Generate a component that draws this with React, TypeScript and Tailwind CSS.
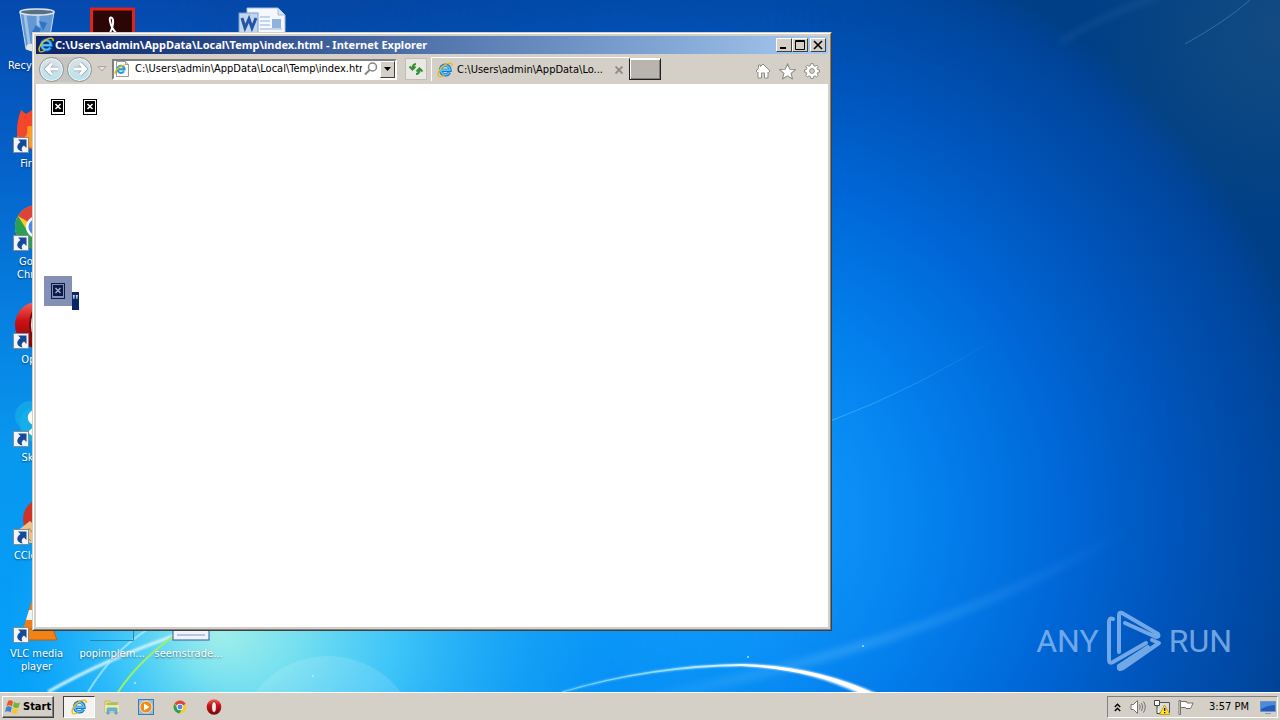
import React, { useState } from 'react';

const uiFont = "font-['DejaVu_Sans_Condensed','DejaVu_Sans',sans-serif]";
const raised = 'bg-[#d4d0c8] border border-t-white border-l-white border-r-[#404040] border-b-[#404040]';

const filePath = 'C:\\Users\\admin\\AppData\\Local\\Temp\\index.html';

/* ---------- wallpaper ---------- */

const Wallpaper: React.FC = () => (
  <svg className="absolute inset-0 h-full w-full" viewBox="0 0 1280 693" preserveAspectRatio="none" aria-hidden="true">
    <defs>
      <radialGradient id="glow" gradientUnits="userSpaceOnUse" cx="0" cy="0" r="1" gradientTransform="translate(690 520) scale(640 610)">
        <stop offset="0" stopColor="#1ba2fd" />
        <stop offset="0.22" stopColor="#0d92f8" />
        <stop offset="0.4" stopColor="#037eec" />
        <stop offset="0.58" stopColor="#0068d8" />
        <stop offset="0.76" stopColor="#0054ba" />
        <stop offset="0.95" stopColor="#004499" />
        <stop offset="1.15" stopColor="#003f85" />
      </radialGradient>
      <linearGradient id="leftSky" x1="0" y1="0" x2="0" y2="1">
        <stop offset="0" stopColor="#0549ad" />
        <stop offset="0.22" stopColor="#0560c8" />
        <stop offset="0.45" stopColor="#067fe0" />
        <stop offset="0.65" stopColor="#0898f0" />
        <stop offset="1" stopColor="#05a0fa" />
      </linearGradient>
      <linearGradient id="leftFade" x1="0" y1="0" x2="1" y2="0">
        <stop offset="0" stopColor="#fff" />
        <stop offset="0.2" stopColor="#fff" />
        <stop offset="1" stopColor="#000" />
      </linearGradient>
      <mask id="leftMask">
        <rect width="850" height="693" fill="url(#leftFade)" />
      </mask>
      <radialGradient id="aqua" gradientUnits="userSpaceOnUse" cx="0" cy="0" r="1" fx="-0.3" fy="0" gradientTransform="translate(310 635) scale(305 260)">
        <stop offset="0" stopColor="#a0eeea" />
        <stop offset="0.2" stopColor="#76e0f0" />
        <stop offset="0.45" stopColor="#48cefa" stopOpacity="0.85" />
        <stop offset="1" stopColor="#20b0fa" stopOpacity="0" />
      </radialGradient>
      <radialGradient id="corner" gradientUnits="userSpaceOnUse" cx="1280" cy="30" r="190">
        <stop offset="0" stopColor="#1a5080" stopOpacity="0.75" />
        <stop offset="1" stopColor="#1a5080" stopOpacity="0" />
      </radialGradient>
      <linearGradient id="arc" x1="560" y1="0" x2="760" y2="0" gradientUnits="userSpaceOnUse">
        <stop offset="0" stopColor="#8fdcff" stopOpacity="0.7" />
        <stop offset="0.6" stopColor="#9fe0ff" />
        <stop offset="1" stopColor="#fff" />
      </linearGradient>
      <linearGradient id="thin" x1="832" y1="0" x2="1000" y2="0" gradientUnits="userSpaceOnUse">
        <stop offset="0" stopColor="#55b8ff" stopOpacity="0.7" />
        <stop offset="1" stopColor="#55b8ff" stopOpacity="0" />
      </linearGradient>
      <linearGradient id="beam" x1="560" y1="0" x2="1130" y2="0" gradientUnits="userSpaceOnUse">
        <stop offset="0" stopColor="#6cc4ff" stopOpacity="0" />
        <stop offset="0.5" stopColor="#6cc4ff" stopOpacity="0.3" />
        <stop offset="1" stopColor="#6cc4ff" stopOpacity="0" />
      </linearGradient>
      <filter id="soft" x="-20%" y="-50%" width="140%" height="200%">
        <feGaussianBlur stdDeviation="3" />
      </filter>
      <filter id="softer" x="-20%" y="-50%" width="140%" height="200%">
        <feGaussianBlur stdDeviation="1" />
      </filter>
    </defs>
    <rect width="1280" height="693" fill="url(#glow)" />
    <rect width="850" height="693" fill="url(#leftSky)" mask="url(#leftMask)" />
    <ellipse cx="310" cy="635" rx="305" ry="260" fill="url(#aqua)" />
    <rect x="1080" width="200" height="230" fill="url(#corner)" />
    <ellipse cx="328" cy="745" rx="90" ry="88" fill="#fff" opacity="0.13" />
    <path d="M832 421Q920 388 1010 330" fill="none" stroke="url(#thin)" strokeWidth="1" />
    <path d="M1185 44Q1225 22 1250 0" fill="none" stroke="#4c86c0" strokeOpacity="0.6" strokeWidth="1" />
    <path d="M1060 42Q1110 12 1160 -4" fill="none" stroke="#4c86c0" strokeOpacity="0.15" strokeWidth="6" filter="url(#soft)" />
    <path d="M560 712Q720 690 850 650Q1000 606 1130 530" fill="none" stroke="url(#beam)" strokeWidth="10" filter="url(#soft)" />
    <path d="M560 693Q650 666 742 665Q816 666 880 696L862 696Q806 669 742 667Q650 668 564 693Z" fill="url(#arc)" filter="url(#softer)" />
    <path d="M561 693Q650 666 742 665Q816 667 875 695L866 695Q810 670 742 667Q650 668 564 693Z" fill="url(#arc)" />
    <path d="M48 693Q105 660 182 634" fill="none" stroke="#d8f6ff" strokeWidth="3" filter="url(#softer)" />
    <path d="M88 693Q112 653 148 630" fill="none" stroke="#b6ebff" strokeWidth="2" opacity="0.7" />
    <path d="M118 693Q140 660 178 634" fill="none" stroke="#9af06a" strokeWidth="2" />
    <g fill="#c9f2ff" opacity="0.8">
      <circle cx="135" cy="684" r="1" />
      <circle cx="863" cy="647" r="1" />
      <circle cx="748" cy="658" r="1" />
      <circle cx="313" cy="677" r="1" />
    </g>
  </svg>
);

/* ---------- icons ---------- */

const IeIcon: React.FC<{ className: string }> = ({ className }) => (
  <svg className={className} viewBox="0 0 16 16" aria-hidden="true">
    <path d="M12.6 10.4A4.9 4.9 0 1 1 13.2 8.4H4.4" fill="none" stroke="#1477c8" strokeWidth="3.2" />
    <path d="M12.2 10.6A4.6 4.6 0 1 1 12.9 8.1H4.6" fill="none" stroke="#5cc3f5" strokeWidth="1.6" />
    <path d="M2.4 14.8C-1.2 13 3 5.200 8.600 2.400C12.500 .4 15.800 .6 15 4.200" fill="none" stroke="#eeb916" strokeWidth="1.5" />
    <path d="M2.400 14.800C4 15.400 6 14.200 7 13.600" fill="none" stroke="#eeb916" strokeWidth="1.200" />
  </svg>
);

const PageIcon: React.FC = () => (
  <svg className="h-4 w-4 shrink-0" viewBox="0 0 16 16" aria-hidden="true">
    <path d="M2.500 .5H11.500L14.500 3.500V15.500H2.500Z" fill="#fdfdf6" stroke="#9a9a90" />
    <path d="M11.500 .5V3.500H14.500" fill="#ddd" stroke="#9a9a90" />
    <path d="M10 10.200A3.500 3.500 0 1 1 10.500 8.300H4" fill="none" stroke="#2a97d8" strokeWidth="2.200" />
    <path d="M1.500 13C0 11 4 5.500 10.500 4" fill="none" stroke="#d9c215" strokeWidth="1.500" />
  </svg>
);

const ChromeIcon: React.FC<{ className: string }> = ({ className }) => (
  <svg className={className} viewBox="0 0 48 48" aria-hidden="true">
    <circle cx="24" cy="24" r="22" fill="#f7cc2f" />
    <path d="M24 24L5 13A22 22 0 0 1 43 13Z" fill="#dc4437" />
    <path d="M24 24L43 13H24Z" fill="#dc4437" />
    <path d="M5 13A22 22 0 0 0 22 46L32 29L24 24L15 29Z" fill="#2c9e55" />
    <circle cx="24" cy="24" r="11" fill="#fff" />
    <circle cx="24" cy="24" r="8.500" fill="#4a87ee" />
  </svg>
);

const OperaIcon: React.FC<{ className: string }> = ({ className }) => (
  <svg className={className} viewBox="0 0 48 48" aria-hidden="true">
    <defs>
      <linearGradient id="operaRed" x1="0" y1="0" x2="0" y2="1">
        <stop offset="0" stopColor="#f2635c" />
        <stop offset="0.4" stopColor="#cc1217" />
        <stop offset="1" stopColor="#7c0409" />
      </linearGradient>
    </defs>
    <ellipse cx="24" cy="24" rx="22" ry="23" fill="url(#operaRed)" />
    <ellipse cx="24" cy="24" rx="7" ry="16" fill="#f4eeee" stroke="#79070c" strokeWidth="2" />
  </svg>
);

const RecycleIcon: React.FC = () => (
  <svg className="h-12 w-12" viewBox="0 0 48 48" aria-hidden="true">
    <path d="M7 5L13 42Q24 47 35 42L41 5Z" fill="#7cabdc" fillOpacity="0.8" stroke="#c5def3" />
    <path d="M12 8L17 43M25 8V44" stroke="#dceefc" strokeOpacity="0.5" strokeWidth="3" />
    <path d="M18 27L23 18L28 22L24 31ZM26 14L34 16L30 24Z" fill="#2f73c4" />
    <path d="M13 42Q13 36 19 37L30 41L35 42Q24 47 13 42Z" fill="#e7e6dc" />
    <ellipse cx="24" cy="5" rx="17" ry="3" fill="#5c6f80" stroke="#dce8f0" strokeWidth="1.500" />
  </svg>
);

const AcrobatIcon: React.FC = () => (
  <svg className="h-12 w-12" viewBox="0 0 48 48" aria-hidden="true">
    <rect x="3.500" y="2" width="42" height="43" fill="#2c0607" stroke="#e2231a" strokeWidth="3" />
    <path d="M14 36C20 32 26 20 25 13C24 9 21 10 22 14C24 24 30 29 36 28C30 24 18 30 14 36Z" fill="none" stroke="#fff" strokeWidth="2" />
  </svg>
);

const WordIcon: React.FC = () => (
  <svg className="h-12 w-12" viewBox="0 0 48 48" aria-hidden="true">
    <path d="M9 1H40L47 8V46H9Z" fill="#f4f8fd" stroke="#a9bddb" />
    <path d="M40 1V8H47" fill="#d4e1f2" stroke="#a9bddb" />
    <path d="M22 10H32M22 14H32M22 18H32M22 22H44" stroke="#93aed6" />
    <rect x="34" y="12" width="9" height="9" fill="#8fb2de" />
    <rect x="1" y="6" width="19" height="20" fill="#c3d6f0" stroke="#7d9dcc" />
    <path d="M4 11L7 21L11 12L14 21L18 11" fill="none" stroke="#2455a4" strokeWidth="3" />
  </svg>
);

const FirefoxIcon: React.FC = () => (
  <svg className="h-12 w-12" viewBox="0 0 48 48" aria-hidden="true">
    <path d="M4 28C4 19 5 13 8 5L13 9L19 5L23 9C30 5 40 9 43 17C48 29 44 39 34 44C20 48 5 42 4 28Z" fill="#f5452a" />
    <path d="M4 30C9 36 16 32 14 22C19 18 19 24 25 25C18 28 20 34 28 34C36 35 36 40 26 43C15 44 6 39 4 30Z" fill="#ff9a25" />
    <circle cx="31" cy="24" r="9" fill="#6f45a6" />
  </svg>
);

const SkypeIcon: React.FC = () => (
  <svg className="h-12 w-12" viewBox="0 0 48 48" aria-hidden="true">
    <circle cx="17" cy="17" r="15" fill="#12a5e8" />
    <circle cx="26" cy="25" r="19" fill="#16aeea" />
    <path d="M34 17C29 9 16 13 18 20C20 27 33 24 33 31C32 37 22 37 17 31" fill="none" stroke="#fff" strokeWidth="6" />
  </svg>
);

const CCleanerIcon: React.FC = () => (
  <svg className="h-12 w-12" viewBox="0 0 48 48" aria-hidden="true">
    <circle cx="31" cy="22" r="21" fill="#cf3327" />
    <circle cx="31" cy="22" r="12" fill="#6fb2dc" />
    <path d="M4 34L17 24L30 36L27 46H8Z" fill="#ecc08c" />
    <path d="M10 36L18 44M16 31L24 42" stroke="#b98549" />
  </svg>
);

const VlcIcon: React.FC = () => (
  <svg className="h-12 w-12" viewBox="0 0 48 48" aria-hidden="true">
    <path d="M20 2H28L39 38H9Z" fill="#f17c12" />
    <path d="M16 15H32L35 25H13Z" fill="#f2f2f2" />
    <path d="M5 34H40L44 45H3Z" fill="#f18213" stroke="#c95c04" />
  </svg>
);

const DocumentIcon: React.FC = () => (
  <svg className="h-12 w-12" viewBox="0 0 48 48" aria-hidden="true">
    <rect x="10" y="4" width="36" height="41" fill="#eef3fc" stroke="#41529c" strokeWidth="1" />
    <path d="M14 35H42M14 40H42" stroke="#8496cc" />
  </svg>
);

const BlankIcon: React.FC = () => (
  <svg className="h-12 w-12" viewBox="0 0 48 48" aria-hidden="true">
    <path d="M2 45.500H45.500V4" fill="none" stroke="#2a86a8" strokeWidth="1" />
  </svg>
);

const ShortcutArrow: React.FC = () => (
  <svg className="absolute bottom-0 left-0 h-4 w-4" viewBox="0 0 16 16" aria-hidden="true">
    <rect x=".5" y=".5" width="15" height="15" fill="#f2f5f8" stroke="#858b92" />
    <path d="M5 2.500H13.500V11L11 8.500C8.500 10 8 12 9.500 14.500C3.500 13.500 2.500 8.500 7.500 5Z" fill="#164a96" />
  </svg>
);

/* ---------- desktop ---------- */

interface DesktopItem {
  label: string;
  icon: React.ReactNode;
  place: string;
  shortcut?: boolean;
}

const desktopItems: DesktopItem[] = [
  { label: 'Recycle Bin', icon: <RecycleIcon />, place: 'col-start-1 row-start-1' },
  { label: '', icon: <AcrobatIcon />, place: 'col-start-2 row-start-1' },
  { label: '', icon: <WordIcon />, place: 'col-start-4 row-start-1' },
  { label: 'Firefox', icon: <FirefoxIcon />, place: 'col-start-1 row-start-2', shortcut: true },
  { label: 'Google Chrome', icon: <ChromeIcon className="h-12 w-12" />, place: 'col-start-1 row-start-3', shortcut: true },
  { label: 'Opera', icon: <OperaIcon className="h-12 w-12" />, place: 'col-start-1 row-start-4', shortcut: true },
  { label: 'Skype', icon: <SkypeIcon />, place: 'col-start-1 row-start-5', shortcut: true },
  { label: 'CCleaner', icon: <CCleanerIcon />, place: 'col-start-1 row-start-6', shortcut: true },
  { label: 'VLC media player', icon: <VlcIcon />, place: 'col-start-1 row-start-7', shortcut: true },
  { label: 'popimplem...', icon: <BlankIcon />, place: 'col-start-2 row-start-7' },
  { label: 'seemstrade...', icon: <DocumentIcon />, place: 'col-start-3 row-start-7' },
];

const DesktopIcons: React.FC = () => (
  <div className="relative grid auto-rows-[98px] grid-cols-[repeat(4,73px)] gap-x-0.5 pt-[7px]">
    {desktopItems.map((item, i) => (
      <div key={i} className={`flex flex-col items-center ${item.place}`}>
        <div className="relative h-12 w-12">
          {item.icon}
          {item.shortcut && <ShortcutArrow />}
        </div>
        <span className="mt-1 w-16 text-center text-[11px] leading-[13px] text-white [text-shadow:0_1px_2px_#0008]">
          {item.label}
        </span>
      </div>
    ))}
  </div>
);

const Watermark: React.FC = () => (
  <div className="absolute right-12 bottom-5 flex items-center gap-[7px] font-[Roboto,sans-serif] text-[32px] leading-none text-[#8fbcf0]/80">
    <span>ANY</span>
    <svg className="h-[62px] w-14" viewBox="0 0 56 62" fill="none" stroke="currentColor" strokeWidth="4" strokeLinejoin="round" strokeLinecap="round" aria-hidden="true">
      <path d="M7 9Q3 7 3 12V50Q3 54 7 52L40 33" />
      <path d="M13 42V5Q13 2 16 3L52 24Q54 27 50 27L19 13" />
      <path d="M46 30L53 33L17 58Q12 61 13 56L42 37" />
    </svg>
    <span>RUN</span>
  </div>
);

/* ---------- browser window ---------- */

const TitleButton: React.FC<{ label: string; children: React.ReactNode }> = ({ label, children }) => (
  <button aria-label={label} className={`flex h-3.5 w-4 items-center justify-center ${raised}`}>
    <svg className="h-3 w-3" viewBox="0 0 12 12" fill="none" stroke="#000" aria-hidden="true">
      {children}
    </svg>
  </button>
);

const TitleBar: React.FC = () => (
  <header className="flex h-[18px] items-center bg-linear-to-r from-[#0a246a] to-[#a6caf0] pr-0.5 pl-0.5">
    <IeIcon className="h-4 w-4 shrink-0" />
    <h1 className="grow truncate pl-px font-['Noto_Sans',sans-serif] text-[11px] leading-4 font-bold text-white">{filePath} - Internet Explorer</h1>
    <TitleButton label="Minimize">
      <path d="M2 9H8" strokeWidth="2" />
    </TitleButton>
    <TitleButton label="Maximize">
      <path d="M1.500 1.500H10.500V10.500H1.500ZM1 2.500H11" />
    </TitleButton>
    <span className="w-0.5" />
    <TitleButton label="Close">
      <path d="M2 2L10 10M10 2L2 10" strokeWidth="1.600" />
    </TitleButton>
  </header>
);

const NavButton: React.FC<{ label: string; d: string }> = ({ label, d }) => (
  <button aria-label={label} className="flex h-[25px] w-[25px] items-center justify-center rounded-full border border-[#8c979e] bg-linear-to-b from-[#dfe1e2] to-[#b6e2ee] shadow-[inset_0_0_0_1px_#eef6f8]">
    <svg className="h-4 w-4" viewBox="0 0 16 16" fill="none" aria-hidden="true">
      <path d={d} stroke="#95a4ad" strokeWidth="4.500" />
      <path d={d} stroke="#fff" strokeWidth="3" />
    </svg>
  </button>
);

const Toolbar: React.FC = () => {
  const [address, setAddress] = useState(filePath);

  return (
    <nav className="flex h-[30px] items-center bg-[#d4d0c8]">
      <div className="ml-[3px] flex items-center gap-[3px] rounded-full bg-[#c6c5c0]">
        <NavButton label="Back" d="M14 8H3M8 2.500L2.500 8L8 13.500" />
        <NavButton label="Forward" d="M2 8H13M8 2.500L13.500 8L8 13.500" />
      </div>
      <button aria-label="Recent pages" className="flex w-5 justify-center">
        <svg className="h-1.5 w-2.5" viewBox="0 0 10 6" aria-hidden="true">
          <path d="M1 .5H9L5 5Z" fill="#e4e1da" stroke="#aaa69c" />
        </svg>
      </button>
      <div className="flex h-[21px] w-[36%] items-center border-2 border-t-[#808080] border-r-white border-b-white border-l-[#808080] bg-white">
        <PageIcon />
        <input
          aria-label="Address"
          value={address}
          onChange={(e) => setAddress(e.target.value)}
          className="ml-[5px] min-w-0 grow bg-white text-[11px] leading-4 text-black outline-none"
        />
        <button aria-label="Search" className="px-px">
          <svg className="h-4 w-4" viewBox="0 0 16 16" fill="none" stroke="#858585" aria-hidden="true">
            <circle cx="9.500" cy="6" r="4" strokeWidth="1.500" />
            <path d="M6.500 9L2 13.500" strokeWidth="2" />
          </svg>
        </button>
        <button aria-label="Show address bar history" className={`flex h-[17px] w-[15px] shrink-0 items-center justify-center ${raised}`}>
          <svg className="h-1 w-[7px]" viewBox="0 0 7 4" aria-hidden="true">
            <path d="M0 0H7L3.500 4Z" />
          </svg>
        </button>
      </div>
      <button aria-label="Refresh" className="ml-2 flex h-[22px] w-[22px] items-center justify-center border border-[#c0bdb5] bg-[#e9e8e3]">
        <svg className="h-4 w-4" viewBox="0 0 16 16" fill="none" stroke="#35903a" strokeWidth="2" aria-hidden="true">
          <path d="M8 3Q4.500 3 4.500 8M1.500 5.500L4.500 8.500L7.500 5.500" />
          <path d="M8 13Q11.500 13 11.500 8M8.500 10.500L11.500 7.500L14.500 10.500" />
        </svg>
      </button>
      <div className="ml-1 flex h-6 w-[25%] items-center border-t border-l border-white pl-[5px]">
        <IeIcon className="h-4 w-4 shrink-0" />
        <span className="grow pl-1 text-[11px] leading-4 text-black">C:\Users\admin\AppData\Lo...</span>
        <button aria-label="Close tab" className="mr-1.5">
          <svg className="h-2 w-2" viewBox="0 0 8 8" stroke="#8d8a85" strokeWidth="1.800" aria-hidden="true">
            <path d="M.5 .5L7.500 7.500M7.500 .5L.5 7.500" />
          </svg>
        </button>
      </div>
      <button aria-label="New tab" className="h-[22px] w-8 border border-t-white border-r-[#202020] border-b-[#202020] border-l-[#202020] bg-[#b9b5ae] shadow-[inset_1px_1px_0_#fff,inset_-1px_-1px_0_#808080]" />
      <div className="ml-auto flex items-center gap-2 pt-1 pr-2">
        <button aria-label="Home">
          <svg className="h-4 w-4" viewBox="0 0 16 16" fill="#fff" stroke="#8f8c86" strokeLinejoin="round" aria-hidden="true">
            <path d="M8 1L15 8L13.500 9.500L13 9V15H9.500V10H6.500V15H3V9L2.500 9.500L1 8L3.500 5.500V2H5.500V3.500Z" />
          </svg>
        </button>
        <button aria-label="Favorites">
          <svg className="h-[17px] w-[17px]" viewBox="0 0 16 16" fill="#fff" stroke="#8f8c86" strokeLinejoin="round" aria-hidden="true">
            <path d="M8 .7L10.100 5.800L15.500 6.200L11.400 9.700L12.700 15L8 12.100L3.300 15L4.600 9.700L.5 6.200L5.900 5.800Z" />
          </svg>
        </button>
        <button aria-label="Tools">
          <svg className="h-4 w-4" viewBox="0 0 16 16" fill="#fff" stroke="#8f8c86" strokeLinejoin="round" aria-hidden="true">
            <path d="M6.800 .6H9.200L9.600 2.600L11.200 3.200L12.900 2.200L14.300 3.700L13.100 5.300L13.700 6.700L15.500 7V9.100L13.700 9.500L13.100 10.900L14.200 12.500L12.700 14L11 12.900L9.600 13.500L9.200 15.500H6.800L6.400 13.500L5 12.900L3.300 14L1.800 12.500L2.900 10.900L2.300 9.500L.5 9.100V7L2.300 6.600L2.900 5.200L1.800 3.600L3.300 2.100L5 3.200L6.400 2.600Z" />
            <circle cx="8" cy="8" r="2.400" fill="#d4d0c8" />
          </svg>
        </button>
      </div>
    </nav>
  );
};

const BrokenImage: React.FC<{ selected?: boolean }> = ({ selected }) => (
  <div className={`flex h-[30px] w-7 items-center justify-center ${selected ? 'bg-[#848fb5]' : ''}`}>
    <svg className="h-4 w-3.5" viewBox="0 0 14 16" role="img" aria-label="Missing image">
      <rect x=".5" y=".5" width="13" height="15" fill={selected ? '#848fb5' : '#fff'} stroke={selected ? '#0b1a4a' : '#000'} />
      <rect x="2" y="2" width="10" height="11" fill={selected ? '#0b1a4a' : '#000'} />
      <path d="M4.500 5L9.500 10M9.500 5L4.500 10" stroke={selected ? '#a3abc8' : '#fff'} strokeWidth="1.500" />
    </svg>
  </div>
);

const BrowserWindow: React.FC = () => (
  <section className="absolute top-8 right-[35%] bottom-[61px] left-8 flex flex-col border border-t-[#d4d0c8] border-r-[#404040] border-b-[#404040] border-l-[#d4d0c8] bg-[#d4d0c8]">
    <div className="flex grow flex-col border border-t-white border-r-[#808080] border-b-[#808080] border-l-white p-0.5">
      <TitleBar />
      <Toolbar />
      <main className="grow bg-white p-2">
        <div className="flex gap-1">
          <BrokenImage />
          <BrokenImage />
        </div>
        <div className="mt-[154px] flex items-start">
          <BrokenImage selected />
          <span className="mt-4 h-[18px] bg-[#0a246a] font-['Liberation_Serif',serif] text-base leading-[18px] text-white">"</span>
        </div>
      </main>
    </div>
  </section>
);

/* ---------- taskbar ---------- */

const Taskbar: React.FC = () => (
  <footer className="relative flex h-7 shrink-0 items-center border-t border-white bg-[#d4d0c8] pt-px pr-0.5 pl-0.5 text-[11px] text-black">
    <button className={`flex h-[22px] items-center gap-0.5 px-0.5 font-bold ${raised} shadow-[inset_-1px_-1px_0_#808080]`}>
      <svg className="h-4 w-4" viewBox="0 0 16 16" aria-hidden="true">
        <path d="M3 2Q5.500 .5 8 2.500L7 7.500Q4.500 5.500 1.500 7Z" fill="#e65a27" />
        <path d="M9 3Q12 5 15 3.500L13.500 8.500Q11 9.500 8 8Z" fill="#75b334" />
        <path d="M1.300 8Q4 6.500 6.800 8.500L5.600 13.500Q3 11.500 0 13Z" fill="#3a85d0" />
        <path d="M7.800 9Q10.500 10.500 13.300 9.500L12 14.500Q9.500 15.500 6.600 14Z" fill="#f6c62c" />
      </svg>
      Start
    </button>
    <div className="ml-[9px] flex items-center">
      <button aria-label="Internet Explorer" className="flex h-[22px] w-8 items-center justify-center border border-t-[#404040] border-r-white border-b-white border-l-[#404040] bg-[#f4f3f0]">
        <IeIcon className="h-4 w-4" />
      </button>
      <button aria-label="Windows Explorer" className="flex w-[34px] justify-center">
        <svg className="h-4 w-4" viewBox="0 0 16 16" aria-hidden="true">
          <path d="M1 2H6L7 3.500H14V13H1Z" fill="#f1d673" stroke="#c9a945" strokeWidth=".7" />
          <path d="M3 4H13V7H3Z" fill="#8cc77b" />
          <path d="M1 6H15V13H1Z" fill="#f8e79a" />
          <path d="M3 15V10Q3 9 4 9H12Q13 9 13 10V15H11V12H5V15Z" fill="#69b9e6" stroke="#3a8ec1" strokeWidth=".6" />
        </svg>
      </button>
      <button aria-label="Windows Media Player" className="flex w-[34px] justify-center">
        <svg className="h-4 w-4" viewBox="0 0 16 16" aria-hidden="true">
          <rect x=".5" y=".5" width="15" height="15" fill="#8fc0e6" stroke="#417aa8" />
          <circle cx="8" cy="8" r="6" fill="#f28b16" stroke="#fff3d8" strokeWidth=".8" />
          <path d="M6 4.500L11.500 8L6 11.500Z" fill="#fff" />
        </svg>
      </button>
      <button aria-label="Google Chrome" className="flex w-[34px] justify-center">
        <ChromeIcon className="h-3.5 w-3.5" />
      </button>
      <button aria-label="Opera" className="flex w-[34px] justify-center">
        <OperaIcon className="h-4 w-4" />
      </button>
    </div>
    <div className="ml-auto flex h-[22px] items-center border border-t-[#808080] border-r-white border-b-white border-l-[#808080] pr-px pl-1">
      <button aria-label="Show hidden icons" className="flex w-2.5 justify-center">
        <svg className="h-[9px] w-[7px]" viewBox="0 0 7 9" fill="none" stroke="#000" strokeWidth="1.400" aria-hidden="true">
          <path d="M.8 4L3.500 1.200L6.200 4M.8 8L3.500 5.200L6.200 8" />
        </svg>
      </button>
      <button aria-label="Volume" className="ml-1.5 flex w-5 justify-center">
        <svg className="h-4 w-4" viewBox="0 0 16 16" fill="none" stroke="#77746f" aria-hidden="true">
          <path d="M1 5.500H3.500L7.500 1.500V14.500L3.500 10.500H1Z" fill="#fff" />
          <path d="M9.500 5.500Q11 8 9.500 10.500M11.500 4Q14 8 11.500 12M13.500 2.500Q17 8 13.500 13.500" />
        </svg>
      </button>
      <button aria-label="Network" className="ml-1 flex w-5 justify-center">
        <svg className="h-4 w-4" viewBox="0 0 16 16" aria-hidden="true">
          <path d="M3.500 3.500H15.500V13.500H3.500Z" fill="#dcdcd8" stroke="#555" />
          <path d="M.5 1.500H5.500V6.500H.5ZM3 6.500V14.500H6" fill="#fff" stroke="#444" />
          <path d="M10.500 6L16 15.500H5.500Z" fill="#ffe12e" stroke="#a98b00" strokeWidth=".7" />
          <path d="M10.700 9V12M10.700 13V14.300" stroke="#000" strokeWidth="1.200" />
        </svg>
      </button>
      <button aria-label="Action Center" className="ml-1 flex w-5 justify-center">
        <svg className="h-4 w-4" viewBox="0 0 16 16" fill="#fff" stroke="#74716c" aria-hidden="true">
          <path d="M1 1.500H2.500V15.500H1Z" />
          <path d="M2.500 2.500H8.500L9 4H15L13.500 7.500L12.500 9.500H8L7.500 8.500H2.500Z" />
        </svg>
      </button>
      <time className="mr-2.5 ml-3 w-[42px] text-center whitespace-nowrap">3:57 PM</time>
      <button aria-label="Show desktop" className="flex justify-center">
        <svg className="h-4 w-4" viewBox="0 0 16 16" aria-hidden="true">
          <path d="M.5 2.500H15.500V12.500H.5Z" fill="#205cb9" stroke="#7592bb" />
          <path d="M1 3H15V6Q8 6 1 10Z" fill="#4c8ada" />
          <path d="M5 14.500H11" stroke="#8899b0" />
        </svg>
      </button>
    </div>
  </footer>
);

const App: React.FC = () => {
  return (
    <div className={`flex h-screen flex-col overflow-hidden ${uiFont}`}>
      <div className="relative min-h-0 grow bg-[#0068d8]">
        <Wallpaper />
        <DesktopIcons />
        <Watermark />
        <BrowserWindow />
      </div>
      <Taskbar />
    </div>
  );
};

export default App;
